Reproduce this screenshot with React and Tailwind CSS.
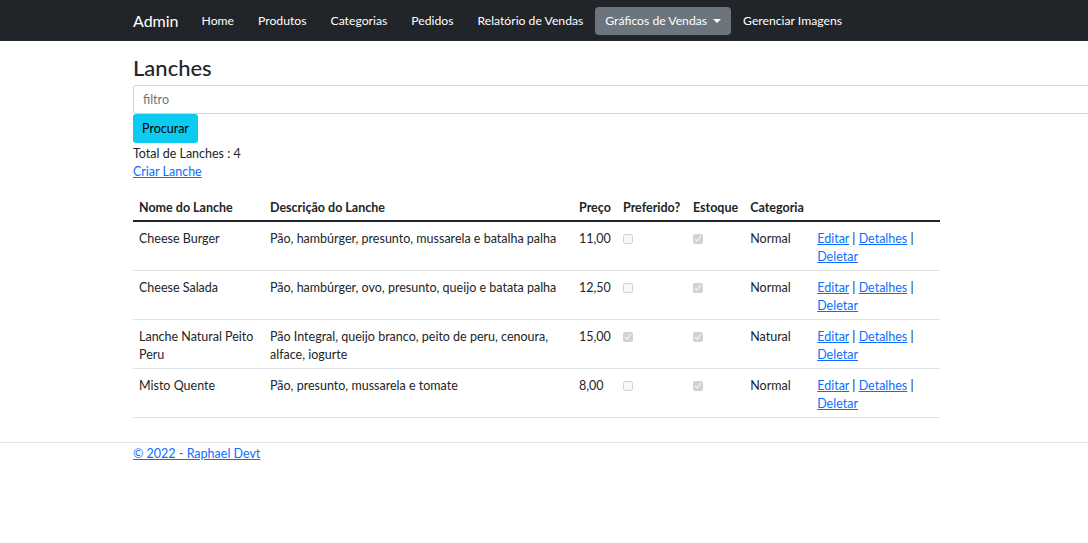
import React from 'react';

const links = ['Home', 'Produtos', 'Categorias', 'Pedidos', 'Relatório de Vendas'];

const lanches = [
  { nome: 'Cheese Burger', desc: 'Pão, hambúrger, presunto, mussarela e batalha palha', preco: '11,00', pref: false, estoque: true, cat: 'Normal' },
  { nome: 'Cheese Salada', desc: 'Pão, hambúrger, ovo, presunto, queijo e batata palha', preco: '12,50', pref: false, estoque: true, cat: 'Normal' },
  { nome: 'Lanche Natural Peito Peru', desc: 'Pão Integral, queijo branco, peito de peru, cenoura, alface, iogurte', preco: '15,00', pref: true, estoque: true, cat: 'Natural' },
  { nome: 'Misto Quente', desc: 'Pão, presunto, mussarela e tomate', preco: '8,00', pref: false, estoque: true, cat: 'Normal' },
];

const Check = ({ checked }) => (
  <input type="checkbox" checked={checked} disabled readOnly className="w-[10px] h-[10px] m-0 mt-[4px] align-top" />
);

const App = () => {
  return (
    <div className="min-h-[543px] bg-white text-[12.5px] leading-[18px] text-[#212529]" style={{ fontFamily: 'Lato, "Noto Sans", sans-serif' }}>
      <nav className="h-[41px] bg-[#212529] flex items-center pl-[133px]">
        <span className="text-white text-[16px] mr-[11px]">Admin</span>
        <div className="flex items-center text-[12.2px]">
          {links.map((l) => (
            <a key={l} className="text-white px-[12px] leading-[28px]">{l}</a>
          ))}
          <button className="h-[28px] px-[10px] bg-[#6c757d] text-white rounded-[4px] flex items-center">
            Gráficos de Vendas
            <span className="ml-[6px] w-0 h-0 border-l-[4px] border-r-[4px] border-t-[4px] border-l-transparent border-r-transparent border-t-white" />
          </button>
          <a className="text-white px-[12px] leading-[28px]">Gerenciar Imagens</a>
        </div>
      </nav>

      <main className="pl-[133px] pt-[14px]">
        <h3 className="text-[22px] leading-[26px] font-medium mb-[4px]">Lanches</h3>
        <div className="w-[1000px] h-[29px] border border-[#ced4da] rounded-[3px] flex items-center px-[9px] text-[#6c757d]">filtro</div>
        <button className="h-[29px] px-[9px] bg-[#0dcaf0] rounded-[3px] text-[#000]">Procurar</button>
        <p className="mt-[2px]">Total de Lanches : 4</p>
        <a className="text-[#0d6efd] underline">Criar Lanche</a>

        <table className="mt-[15px] w-[807px] border-collapse">
          <thead>
            <tr className="border-b-[2px] border-[#212529] text-left">
              <th className="px-[6px] py-[3px] w-[131px] font-bold">Nome do Lanche</th>
              <th className="px-[6px] py-[3px] w-[309px] font-bold">Descrição do Lanche</th>
              <th className="px-[6px] py-[3px] w-[44px] font-bold">Preço</th>
              <th className="px-[6px] py-[3px] w-[70px] font-bold">Preferido?</th>
              <th className="px-[6px] py-[3px] w-[57px] font-bold">Estoque</th>
              <th className="px-[6px] py-[3px] w-[67px] font-bold">Categoria</th>
              <th className="px-[6px] py-[3px]"></th>
            </tr>
          </thead>
          <tbody>
            {lanches.map((l) => (
              <tr key={l.nome} className="border-b border-[#dee2e6] align-top">
                <td className="px-[6px] pt-[8px] pb-[4px]">{l.nome}</td>
                <td className="px-[6px] pt-[8px] pb-[4px]">{l.desc}</td>
                <td className="px-[6px] pt-[8px] pb-[4px]">{l.preco}</td>
                <td className="px-[6px] pt-[8px] pb-[4px]"><Check checked={l.pref} /></td>
                <td className="px-[6px] pt-[8px] pb-[4px]"><Check checked={l.estoque} /></td>
                <td className="px-[6px] pt-[8px] pb-[4px]">{l.cat}</td>
                <td className="px-[6px] pt-[8px] pb-[4px]">
                  <a className="text-[#0d6efd] underline">Editar</a> | <a className="text-[#0d6efd] underline">Detalhes</a> |{' '}
                  <a className="text-[#0d6efd] underline">Deletar</a>
                </td>
              </tr>
            ))}
          </tbody>
        </table>
      </main>

      <footer className="mt-[24px] border-t border-[#dee2e6] pl-[133px] pt-[2px]">
        <a className="text-[#0d6efd] underline">© 2022 - Raphael Devt</a>
      </footer>
    </div>
  );
};

export default App;
